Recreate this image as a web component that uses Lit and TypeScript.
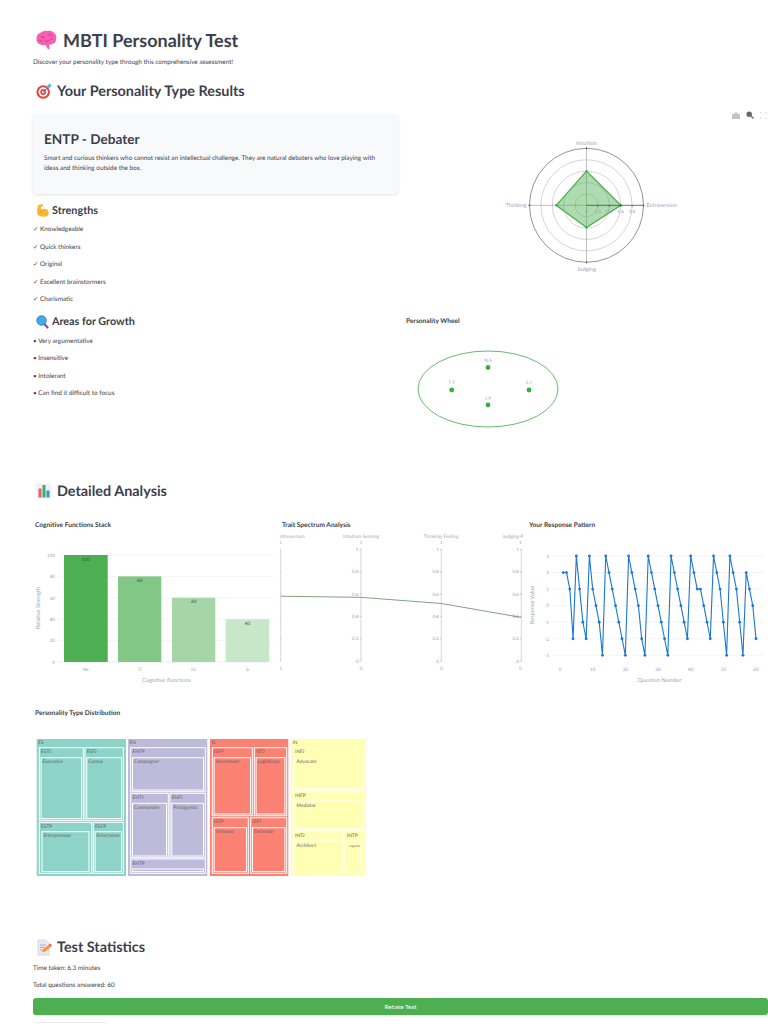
import { LitElement, html, svg, css } from 'lit';
import { customElement } from 'lit/decorators.js';

/* ---------- data ---------- */
const STRENGTHS = ['Knowledgeable', 'Quick thinkers', 'Original', 'Excellent brainstormers', 'Charismatic'];
const GROWTH = ['Very argumentative', 'Insensitive', 'Intolerant', 'Can find it difficult to focus'];

const BARS = [
  { x: 64, w: 43.7, v: 100, name: 'Ne', fill: '#4caf50' },
  { x: 118, w: 43.3, v: 80, name: 'Ti', fill: '#81c784' },
  { x: 172, w: 43.3, v: 60, name: 'Fe', fill: '#a5d6a7' },
  { x: 225.7, w: 43.6, v: 40, name: 'Si', fill: '#c8e6c9' },
];

const RESPONSES = [
  2, 2, 1, -2, 3, 1, -1, -2, 3, 1, 0, -1, -3, 3, 2, 1, 0, -1, -2, -3, 3, 2, 1, 0, -2, -3, 3, 2, 1, 0, -1, -2, -3, 3, 2, 1,
  0, -1, -2, 3, 2, 1, 1, 0, -1, -2, 3, 2, 1, -1, -3, 3, 2, 1, -1, -3, 2, 1, 0, -2,
];

const PARALLEL = [
  { x: 280.7, label: 'Introversion', lx: 292, low: '1', high: '1', v: 0.58 },
  { x: 361, label: 'Intuition-Sensing', lx: 361, low: '0', high: '1', v: 0.57 },
  { x: 441.3, label: 'Thinking-Feeling', lx: 441, low: '0', high: '1', v: 0.515 },
  { x: 521.3, label: 'Judging-P', lx: 513, low: '0', high: '1', v: 0.39 },
];

type Cell = { x0: number; x1: number; y0: number; y1: number; code: string; name: string; iy: number; ix?: number };
type Group = { x0: number; x1: number; label: string; fill: string; cells: Cell[] };

const TREE: Group[] = [
  {
    x0: 36.7, x1: 126, label: 'ES', fill: '#8dd3c7',
    cells: [
      { x0: 39.3, x1: 83.3, y0: 747.7, y1: 820.3, code: 'ESTJ', name: 'Executive', iy: 757.7 },
      { x0: 85, x1: 123.3, y0: 747.7, y1: 820.3, code: 'ESFJ', name: 'Consul', iy: 757.7 },
      { x0: 39.3, x1: 91.7, y0: 822.3, y1: 873.3, code: 'ESTP', name: 'Entrepreneur', iy: 831.7, ix: 2.7 },
      { x0: 93.3, x1: 123.3, y0: 822.3, y1: 873.3, code: 'ESFP', name: 'Entertainer', iy: 831.7 },
    ],
  },
  {
    x0: 128, x1: 207.3, label: 'EN', fill: '#bebada',
    cells: [
      { x0: 130.7, x1: 205.3, y0: 747.7, y1: 791.7, code: 'ENFP', name: 'Campaigner', iy: 757.7 },
      { x0: 130.7, x1: 168.3, y0: 793.3, y1: 857.7, code: 'ENTJ', name: 'Commander', iy: 803.3 },
      { x0: 170, x1: 205.3, y0: 793.3, y1: 857.7, code: 'ENFJ', name: 'Protagonist', iy: 803.3 },
      { x0: 130.7, x1: 205.3, y0: 859, y1: 873.3, code: 'ENTP', name: '', iy: 869 },
    ],
  },
  {
    x0: 210, x1: 288.3, label: 'IS', fill: '#fb8072',
    cells: [
      { x0: 212.3, x1: 252.3, y0: 747.7, y1: 815.7, code: 'ISFP', name: 'Adventurer', iy: 757.7 },
      { x0: 254.3, x1: 286.7, y0: 747.7, y1: 815.7, code: 'ISTJ', name: 'Logistician', iy: 757.7 },
      { x0: 212.3, x1: 248.3, y0: 817.7, y1: 873.3, code: 'ISTP', name: 'Virtuoso', iy: 827.7 },
      { x0: 250.7, x1: 286.7, y0: 817.7, y1: 873.3, code: 'ISFJ', name: 'Defender', iy: 827.7 },
    ],
  },
  {
    x0: 291, x1: 365.7, label: 'IN', fill: '#ffffb3',
    cells: [
      { x0: 293.3, x1: 363.7, y0: 747.7, y1: 790, code: 'INFJ', name: 'Advocate', iy: 757.7 },
      { x0: 293.3, x1: 363.7, y0: 791.7, y1: 830, code: 'INFP', name: 'Mediator', iy: 801 },
      { x0: 293.3, x1: 343.3, y0: 831.7, y1: 873.3, code: 'INTJ', name: 'Architect', iy: 841 },
      { x0: 345, x1: 363.7, y0: 831.7, y1: 873.3, code: 'INTP', name: 'Logician', iy: 841, ix: 2.7 },
    ],
  },
];

/* ---------- emoji, drawn by hand ---------- */
const brain = html`<svg class="emoji" style="width:21px;height:20px" viewBox="0 0 21 20">
  <path d="M5 2.500C7 .6 9.500.4 11.500 1c3-1 6 .3 7.300 2.600 1.700 1.600 2 4 1.200 6 .2 2.300-1.500 4.100-3.800 4.400-1 .6-2 .8-3 .6l.3 3.600c.1 1-1.200 1.300-1.800.6l-2.200-3.800c-2 .3-4 .1-5.500-.8C1.500 13.500 0 11.500.6 9 .1 6.500 2 3.300 5 2.500z" fill="#f45fb4"/>
  <path d="M5 7c1.500-.8 2.800-.4 3.500.8M12.500 5c1.500-.8 3-.3 3.800.8M9 11c1.300.7 2.600.6 3.600-.4M14.500 9.500c1 .2 1.900 0 2.600-.7M3.500 10.500c.9.4 1.700.4 2.500 0" fill="none" stroke="#c93690" stroke-width=".9" stroke-linecap="round"/>
</svg>`;

const target = html`<svg class="emoji" style="width:16px;height:16px" viewBox="0 0 16 16">
  <circle cx="7.200" cy="9" r="6.800" fill="#e8453c"/>
  <circle cx="7.200" cy="9" r="4.700" fill="#fff"/>
  <circle cx="7.200" cy="9" r="3" fill="#e8453c"/>
  <circle cx="7.200" cy="9" r="1.200" fill="#fff"/>
  <path d="M7.200 9l6-6" stroke="#3f6f8f" stroke-width="1"/>
  <path d="M11 2.800l3-2.600.6 1.700 1.400.3-2.800 3-2 -.3z" fill="#4fb8ec"/>
</svg>`;

const biceps = html`<svg class="emoji" style="width:13px;height:13px" viewBox="0 0 13 13">
  <path d="M2.300 1.300C3.500.2 6 0 6.800.8c.5.6.2 1.400-.4 1.700L4.900 3l.6 3c1.400-1.500 4-1.800 5.700-.5 1.500 1.200 1.800 3.500 1.300 5-.4 1.300-2 2.200-4 2.200-2.800 0-5.500-.6-6.800-1.600C1 9 .9 4 2.300 1.300z" fill="#fdb62f"/>
  <path d="M5.500 6c-.4 1-.4 1.800 0 2.500" fill="none" stroke="#e08e10" stroke-width=".7"/>
</svg>`;

const magnifier = html`<svg class="emoji" style="width:13px;height:14px" viewBox="0 0 13 14">
  <path d="M8 8.500l3.500 4" stroke="#7a4fb0" stroke-width="2.200" stroke-linecap="round"/>
  <circle cx="5.500" cy="5.500" r="4.700" fill="#3fa9ea" stroke="#2f7fc0" stroke-width="1"/>
</svg>`;

const chartEmoji = html`<svg class="emoji" style="width:16px;height:16px" viewBox="0 0 16 16">
  <rect x=".5" y=".5" width="15" height="15" rx="1.500" fill="#f2f0f4"/>
  <rect x="2.500" y="5.500" width="3" height="9" fill="#f25c5c"/>
  <rect x="6.500" y="2" width="3" height="12.500" fill="#35b36b"/>
  <rect x="10.500" y="7.500" width="3" height="7" fill="#3f8fe0"/>
</svg>`;

const memo = html`<svg class="emoji" style="width:16px;height:17px" viewBox="0 0 16 17">
  <path d="M2 1h7.500L13 4.500V16H2z" fill="#ece8f2" stroke="#cbc4d8" stroke-width=".6"/>
  <path d="M4 6h6M4 8.500h5M4 11h3.500" stroke="#a79cc0" stroke-width=".8"/>
  <path d="M6 13.500l1-3 6-5 2 2.200-6 5z" fill="#fb9a28"/>
  <path d="M13 5.500l1-.9 2 2.200-1 .9z" fill="#f0436e"/>
</svg>`;

/* ---------- charts, all in page coordinates via viewBox ---------- */
function radar() {
  const cx = 586.5;
  const cy = 205.3;
  const unit = 57;
  const shape = [
    [cx + 0.6 * unit, cy],
    [cx, cy - 0.6 * unit],
    [cx - 0.53 * unit, cy],
    [cx, cy + 0.39 * unit],
  ];
  return html`<svg class="radar" viewBox="406 122 362 160">
    ${[0.2, 0.4, 0.6, 0.8].map((f) => svg`<circle cx=${cx} cy=${cy} r=${f * unit} fill="none" stroke="#d6d6d6" stroke-width="1"/>`)}
    <circle cx=${cx} cy=${cy} r=${unit} fill="none" stroke="#777" stroke-width=".8"/>
    <path d="M${cx} ${cy - unit - 1}V${cy + unit + 1}M${cx - unit - 1} ${cy}H${cx}" stroke="#a4a4a4" stroke-width=".7"/>
    <polygon points=${shape.map((p) => p.join(',')).join(' ')} fill="#4caf50" fill-opacity=".45" stroke="#4caf50" stroke-width="1.300"/>
    ${shape.map((p) => svg`<circle cx=${p[0]} cy=${p[1]} r="1.200" fill="#4caf50"/>`)}
    <path d="M${cx} ${cy}H${cx + unit + 1}" stroke="#333" stroke-width=".7"/>
    ${[0.2, 0.4, 0.6, 0.8, 1].map((f) => svg`<path d="M${cx + f * unit} ${cy}v1.500" stroke="#333" stroke-width=".6"/>`)}
    <path d="M${cx} ${cy - unit - 1}v2M${cx} ${cy + unit - 1}v2M${cx - unit - 1} ${cy}h2" stroke="#333" stroke-width=".8"/>
    ${['0', '0.2', '0.4', '0.6', '0.8'].map((t, i) => svg`<text class="tick mid" x=${cx + i * 11.4} y="213">${t}</text>`)}
    <text class="axis mid" x=${cx} y="144.500">Intuition</text>
    <text class="axis" x="646.500" y="206.500">Extraversion</text>
    <text class="axis end" x="526.500" y="206.500">Thinking</text>
    <text class="axis mid" x=${cx} y="270.500">Judging</text>
  </svg>`;
}

function wheel() {
  const points = [
    { x: 488, y: 367.5, t: 'N-S', ty: 361.5 },
    { x: 451.7, y: 390, t: 'T-F', ty: 384 },
    { x: 529, y: 390, t: 'E-I', ty: 384 },
    { x: 488, y: 405, t: 'J-P', ty: 400 },
  ];
  return html`<svg class="wheel" viewBox="406 340 362 100">
    <ellipse cx="488" cy="389" rx="70" ry="38" fill="none" stroke="#66bb6a" stroke-width="1"/>
    ${points.map(
      (p) => svg`<circle cx=${p.x} cy=${p.y} r="2.400" fill="#3bab41"/>
        <text class="tick mid" x=${p.x} y=${p.ty}>${p.t}</text>`,
    )}
  </svg>`;
}

function barChart() {
  const y = (v: number) => 662 - v * 1.07;
  return html`<svg class="chart" viewBox="33 532 247 158">
    ${[20, 40, 60, 80, 100].map((v) => svg`<path d="M59 ${y(v)}H273" stroke="#eef0f4" stroke-width=".7"/>`)}
    <path d="M59 662H273" stroke="#e4e6ec" stroke-width=".7"/>
    ${BARS.map(
      (b) => svg`<rect x=${b.x} y=${y(b.v)} width=${b.w} height=${b.v * 1.07} fill=${b.fill}/>
        <text class="val mid" x=${b.x + b.w / 2} y=${y(b.v) + 5.500}>${b.v}</text>
        <text class="tick mid" x=${b.x + b.w / 2} y="671">${b.name}</text>`,
    )}
    ${[0, 20, 40, 60, 80, 100].map((v) => svg`<text class="tick end" x="55" y=${y(v) + 1.800}>${v}</text>`)}
    <text class="axis mid" x="166.500" y="681.500">Cognitive Functions</text>
    <text class="axis mid" transform="translate(39.500 608) rotate(-90)">Relative Strength</text>
  </svg>`;
}

function parallelChart() {
  const y = (v: number) => 661 - v * 111.7;
  const line = PARALLEL.map((a) => `${a.x},${y(a.v)}`).join(' ');
  return html`<svg class="chart parallel" viewBox="280 532 242.500 158">
    ${PARALLEL.map(
      (a, i) => svg`<path d="M${a.x} 549.300V661" stroke="#d6d6dc" stroke-width="1"/>
        ${[0, 0.2, 0.4, 0.6, 0.8, 1].map(
          (t) => svg`<path d="M${a.x - 1.500} ${y(t)}H${a.x}" stroke="#8a8a92" stroke-width=".5"/>
            ${i > 0 ? svg`<text class="tick end" x=${a.x - 2.500} y=${y(t) + 1.800}>${t}</text>` : ''}`,
        )}
        <text class="axis mid small" x=${a.lx} y="537.500">${a.label}</text>
        <text class="tick mid" x=${a.x - (i === 3 ? 1 : 0)} y="544">${a.high}</text>
        <text class="tick mid" x=${a.x - (i === 3 ? 1 : 0)} y="669.500">${a.low}</text>`,
    )}
    <polyline points=${line} fill="none" stroke="#5f8a60" stroke-width=".8"/>
  </svg>`;
}

function responseChart() {
  const x = (q: number) => 560 + q * 3.267;
  const y = (v: number) => 605.65 - v * 16.55;
  const pts = RESPONSES.map((v, i) => `${x(i + 1)},${y(v)}`).join(' ');
  return html`<svg class="chart" viewBox="527 532 241 158">
    ${[-3, -2, -1, 0, 1, 2, 3].map(
      (v) => svg`<path d="M552 ${y(v)}H764" stroke="#eef1f6" stroke-width=".7"/>
        <text class="tick end" x="549" y=${y(v) + 1.800}>${v}</text>`,
    )}
    <polyline points=${pts} fill="none" stroke="#1976d2" stroke-width="1.100"/>
    ${RESPONSES.map((v, i) => svg`<circle cx=${x(i + 1)} cy=${y(v)} r="1.400" fill="#1976d2"/>`)}
    ${[0, 10, 20, 30, 40, 50, 60].map((q) => svg`<text class="tick mid" x=${x(q)} y="671">${q}</text>`)}
    <text class="axis mid" x="659.500" y="681.500">Question Number</text>
    <text class="axis mid" transform="translate(534 605) rotate(-90)">Response Value</text>
  </svg>`;
}

function treemap() {
  return html`<svg class="tree" viewBox="33 736 337 144">
    ${TREE.map(
      (g) => svg`<rect x=${g.x0} y="739" width=${g.x1 - g.x0} height="137" fill=${g.fill}/>
        <text class="leaf" x=${g.x0 + 1.500} y="743.800">${g.label}</text>
        ${g.cells.map((c) => {
          const ix = c.ix ?? 1.800;
          return svg`<rect x=${c.x0} y=${c.y0} width=${c.x1 - c.x0} height=${c.y1 - c.y0} fill=${g.fill} stroke="#fff" stroke-width="1"/>
            <text class="leaf" x=${c.x0 + 1.800} y=${c.y0 + 5.500}>${c.code}</text>
            <rect x=${c.x0 + ix} y=${c.iy} width=${c.x1 - c.x0 - 2 * ix} height=${c.y1 - 1.700 - c.iy} fill=${g.fill} stroke="#fff" stroke-width="1"/>
            ${c.name
              ? svg`<text class=${c.code === 'INTP' ? 'leaf tiny' : 'leaf'} x=${c.x0 + ix + 1.500} y=${c.iy + 5.500}>${c.name}</text>`
              : ''}`;
        })}`,
    )}
  </svg>`;
}

@customElement('app-root')
export class AppRoot extends LitElement {
  static styles = css`
    :host {
      display: block;
      width: 768px;
      height: 1024px;
      overflow: hidden;
      background: #fff;
      color: #3b3d49;
      font-family: 'Lato', 'Noto Sans', sans-serif;
      text-rendering: geometricPrecision;
    }
    .page {
      padding: 29px 0 0 33px;
      /* own compositing layer: grayscale text, like the reference */
      opacity: 0.99;
    }
    .emoji {
      flex: none;
      display: block;
    }
    .h1,
    .h2,
    .h3 {
      display: flex;
      align-items: center;
      margin: 0;
      font-weight: 700;
      white-space: nowrap;
    }
    .h1 {
      height: 22px;
      padding-left: 3px;
      gap: 6px;
      font-size: 18px;
    }
    .h2 {
      height: 20px;
      padding-left: 3px;
      gap: 5px;
      font-size: 14.400px;
    }
    .h3 {
      height: 16px;
      padding-left: 3px;
      gap: 3px;
      font-size: 10.800px;
    }
    p {
      margin: 0;
      font-size: 6.400px;
      line-height: 10px;
    }
    .sub {
      margin-top: 7px;
    }
    .results {
      margin-top: 13px;
    }
    .columns {
      display: grid;
      grid-template-columns: 365px 362px;
      column-gap: 8px;
    }
    .card {
      box-sizing: border-box;
      height: 80px;
      margin-top: 13px;
      padding: 16px 11px 0;
      background: #f8f9fa;
      border-radius: 4px;
      box-shadow: 0 1px 3px rgba(0, 0, 0, 0.12);
    }
    .card h3 {
      margin: 0 0 6px;
      font-size: 13.600px;
      font-weight: 700;
      line-height: 18px;
    }
    .strengths {
      margin-top: 8px;
    }
    ul {
      list-style: none;
      margin: 3px 0 0;
      padding: 0;
      font-size: 6.400px;
    }
    li {
      height: 17.500px;
      line-height: 17.500px;
    }
    .growth {
      margin-top: 5px;
    }
    .right {
      min-width: 0;
    }
    .toolbar {
      display: flex;
      justify-content: flex-end;
      align-items: center;
      gap: 6px;
      height: 14px;
      margin-top: 7px;
      padding-right: 1px;
    }
    .radar {
      display: block;
      width: 362px;
      height: 160px;
    }
    .plot-title {
      font-size: 6.600px;
      font-weight: 700;
      line-height: 10px;
    }
    .right .plot-title {
      margin-top: 34px;
    }
    .wheel {
      display: block;
      width: 362px;
      height: 100px;
      margin-top: 14px;
    }
    .analysis {
      margin-top: 41px;
    }
    .charts {
      display: grid;
      grid-template-columns: 247px 247px 241px;
      margin-top: 19px;
    }
    .charts .plot-title,
    .dist {
      padding-left: 2px;
    }
    .chart {
      display: block;
      width: 100%;
      height: 158px;
      margin-top: 2px;
    }
    .parallel {
      width: 242.500px;
    }
    .dist {
      margin-top: 18px;
    }
    .tree {
      display: block;
      width: 337px;
      height: 144px;
      margin-top: 18px;
    }
    .stats {
      margin-top: 57px;
    }
    .stats-line {
      margin-top: 7px;
    }
    .retake {
      display: block;
      box-sizing: border-box;
      width: 735px;
      height: 17px;
      margin-top: 7px;
      padding: 0;
      border: 0;
      border-radius: 3px;
      background: #4caf50;
      color: #fff;
      font: inherit;
      font-size: 6.400px;
      box-shadow: 0 1px 1px rgba(0, 0, 0, 0.08);
    }
    .second {
      display: block;
      box-sizing: border-box;
      width: 72px;
      height: 17px;
      margin: 7px 0 0 2px;
      border: 1px solid #ececef;
      border-radius: 3px;
      background: #fff;
    }
    text {
      font-family: 'Lato', 'Noto Sans', sans-serif;
    }
    .tick {
      font-size: 4.600px;
      fill: #9a9eb0;
    }
    .axis {
      font-size: 5.600px;
      fill: #a2a6b6;
    }
    .axis.small {
      font-size: 4.800px;
    }
    .val {
      font-size: 4.600px;
      fill: #3a4a3a;
    }
    .leaf {
      font-size: 4.800px;
      fill: #5b6268;
    }
    .leaf.tiny {
      font-size: 3px;
    }
    .mid {
      text-anchor: middle;
    }
    .end {
      text-anchor: end;
    }
  `;

  render() {
    return html`<div class="page">
      <h1 class="h1">${brain}MBTI Personality Test</h1>
      <p class="sub">Discover your personality type through this comprehensive assessment!</p>
      <h2 class="h2 results">${target}Your Personality Type Results</h2>

      <div class="columns">
        <div>
          <div class="card">
            <h3>ENTP - Debater</h3>
            <p>
              Smart and curious thinkers who cannot resist an intellectual challenge. They are natural debaters who love
              playing with ideas and thinking outside the box.
            </p>
          </div>
          <h3 class="h3 strengths">${biceps}Strengths</h3>
          <ul>
            ${STRENGTHS.map((s) => html`<li>✓ ${s}</li>`)}
          </ul>
          <h3 class="h3 growth">${magnifier}Areas for Growth</h3>
          <ul>
            ${GROWTH.map((s) => html`<li>• ${s}</li>`)}
          </ul>
        </div>
        <div class="right">
          <div class="toolbar">
            <svg width="8" height="7" viewBox="0 0 8 7"><path d="M0 2h2l1-1.500h2L6 2h2v5H0z" fill="#c4c4c4"/></svg>
            <svg width="8" height="8" viewBox="0 0 8 8">
              <circle cx="3.200" cy="3.200" r="2.700" fill="#666"/>
              <path d="M5 5l2.500 2.500" stroke="#666" stroke-width="1.300"/>
            </svg>
            <svg width="7" height="7" viewBox="0 0 7 7">
              <path d="M0 2V0h2M5 0h2v2M7 5v2H5M2 7H0V5" fill="none" stroke="#d4d4d4" stroke-width=".8"/>
            </svg>
          </div>
          ${radar()}
          <div class="plot-title">Personality Wheel</div>
          ${wheel()}
        </div>
      </div>

      <h2 class="h2 analysis">${chartEmoji}Detailed Analysis</h2>
      <div class="charts">
        <div><div class="plot-title">Cognitive Functions Stack</div>${barChart()}</div>
        <div><div class="plot-title">Trait Spectrum Analysis</div>${parallelChart()}</div>
        <div><div class="plot-title">Your Response Pattern</div>${responseChart()}</div>
      </div>

      <div class="plot-title dist">Personality Type Distribution</div>
      ${treemap()}

      <h2 class="h2 stats">${memo}Test Statistics</h2>
      <p class="stats-line">Time taken: 6.3 minutes</p>
      <p class="stats-line">Total questions answered: 60</p>
      <button class="retake">Retake Test</button>
      <button class="second" aria-label="More"></button>
    </div>`;
  }
}
